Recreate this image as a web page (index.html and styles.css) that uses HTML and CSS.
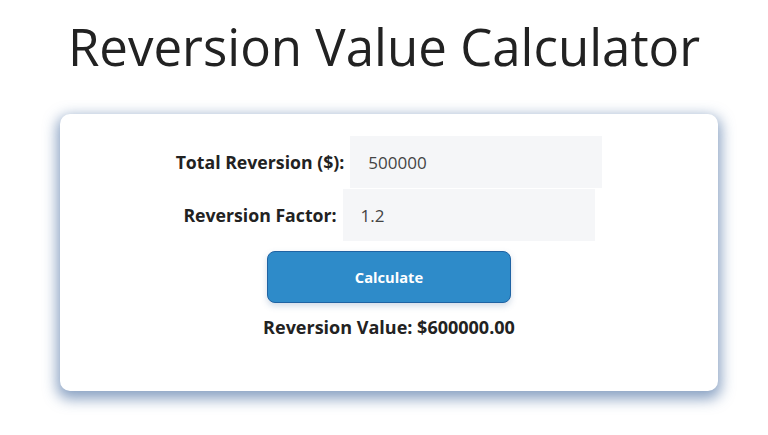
FILE: index.html
```html
<!DOCTYPE html>
<html lang="en">
<head>
  <meta charset="UTF-8">
  <meta name="viewport" content="width=device-width, initial-scale=1.0">
  <title>Reversion Value Calculator</title>
  <link rel="stylesheet" href="styles.css">
</head>
<body>
  <h1 class="title">Reversion Value Calculator</h1>

  <div class="calculator">
    <div class="field">
      <label for="total">Total Reversion ($):</label>
      <input type="text" id="total" value="500000">
    </div>
    <div class="field">
      <label for="factor">Reversion Factor:</label>
      <input type="text" id="factor" value="1.2">
    </div>
    <button class="calc-btn" type="button">Calculate</button>
    <p class="result">Reversion Value: $600000.00</p>
  </div>
</body>
</html>
```

FILE: styles.css
```css
:root {
  --text-color: #222;
  --input-bg: #f5f6f8;
  --btn-bg: #2e8bc9;
  --btn-border: #1f63a3;
}

* {
  box-sizing: border-box;
}

html,
body {
  background: #fff;
}

body {
  margin: 0;
  padding-bottom: 60px;
  font-family: "Open Sans", "DejaVu Sans", sans-serif;
  color: var(--text-color);
}

.title {
  margin: 8px 0 0;
  font-size: 51px;
  font-weight: 400;
  line-height: 76px;
  text-align: center;
}

.calculator {
  width: 658px;
  margin: 30px 0 0 60px;
  padding: 22px 0 0;
  height: 277px;
  background: #fff;
  border-radius: 10px;
  box-shadow: 0 5px 14px 3px rgba(60, 100, 155, 0.6);
  display: flex;
  flex-direction: column;
  align-items: center;
}

.field {
  display: flex;
  align-items: center;
  gap: 6px;
}

.field label {
  font-size: 17.7px;
  font-weight: 700;
}

.field input {
  width: 252px;
  height: 52px;
  border: 0;
  background: var(--input-bg);
  padding: 0 18px;
  font-family: inherit;
  font-size: 17px;
  color: #444;
}

.field + .field {
  margin-top: 1px;
}

.calc-btn {
  margin-top: 10px;
  width: 244px;
  height: 52px;
  background: var(--btn-bg);
  border: 1px solid var(--btn-border);
  border-radius: 8px;
  color: #fff;
  font-family: inherit;
  font-size: 14.7px;
  font-weight: 700;
  box-shadow: 0 3px 6px rgba(70, 110, 160, 0.25);
}

.result {
  margin: 12px 0 0;
  font-size: 18px;
  font-weight: 700;
}
```
